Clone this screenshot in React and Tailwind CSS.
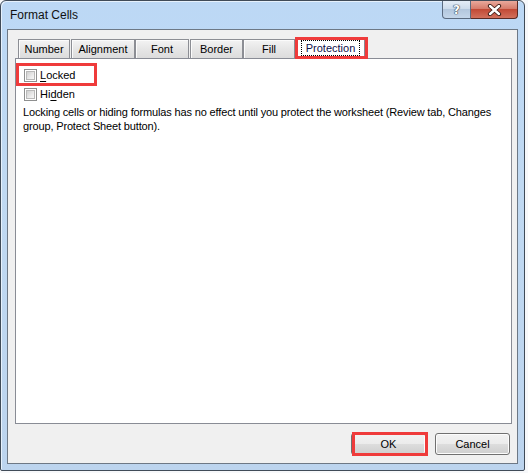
import React from "react";

function Tab({ label, w, ml }) {
  return (
    <div
      className={`h-[19px] ${w} ${ml} border border-b-0 border-[#8c8e94] bg-[linear-gradient(to_bottom,#f3f3f3,#e6e6e6_50%,#dcdcdc)] shadow-[inset_1px_1px_0_#fbfbfb] flex items-center justify-center text-[11px] leading-none pt-[1px]`}
    >
      {label}
    </div>
  );
}

function Check({ children }) {
  return (
    <div className="flex items-center h-[13px]">
      <div className="w-[13px] h-[13px] border border-[#8e8f8f] bg-white p-[1px]">
        <div className="w-full h-full border border-[#b9b9b9] bg-[linear-gradient(135deg,#cfcfcf,#eeeeee_70%,#f6f6f6)]" />
      </div>
      <span className="ml-[3px] text-[11px] leading-none">{children}</span>
    </div>
  );
}

function Btn({ children }) {
  return (
    <div className="w-[75px] h-[22px] rounded-[3px] border border-[#707070] bg-[linear-gradient(to_bottom,#f2f2f2_0%,#ebebeb_50%,#dddddd_50%,#cfcfcf_100%)] shadow-[inset_0_0_0_1px_#fcfcfc] flex items-center justify-center text-[11px] leading-none">
      {children}
    </div>
  );
}

export default function App() {
  return (
    <div className="w-[528px] h-[473px] bg-[#f7f8fa] overflow-hidden font-['Liberation_Sans',Arial,sans-serif] text-black">
      <div className="w-[525px] h-[471px] rounded-t-[6px] rounded-b-[2px] border border-[#404b58] bg-[linear-gradient(to_bottom,#bcd8f5,#c0d9f2_40%,#bcd4ee)] shadow-[inset_1px_1px_0_#e6f1fc] flex flex-col px-[6px] pb-[6px]">
        {/* Title bar */}
        <div className="h-[28px] flex items-start justify-between">
          <span className="ml-[3px] mt-[7px] text-[12px] leading-[14px] text-[#111]">Format Cells</span>
          <div className="flex">
            <div className="w-[29px] h-[18px] rounded-bl-[4px] border border-t-0 border-[#5b6b80] bg-[linear-gradient(to_bottom,#e4edf7,#cbdaea_50%,#b3c7dd_50%,#c4d6ea)] flex items-center justify-center">
              <span className="font-['DejaVu_Sans',sans-serif] font-bold text-[12px] leading-none text-white [text-shadow:0_0_1px_#2b3a4c,0_0_1px_#2b3a4c,0_0_1px_#2b3a4c]">?</span>
            </div>
            <div className="w-[47px] h-[18px] rounded-br-[4px] border border-t-0 border-l-0 border-[#5b2a24] bg-[linear-gradient(to_bottom,#e9a99c,#d47766_50%,#c24a36_50%,#d2705c)] flex items-center justify-center">
              <svg width="15" height="12" viewBox="0 0 15 12">
                <path d="M3 2 L12 10 M12 2 L3 10" stroke="#3a1a14" strokeWidth="4.2" strokeLinecap="round" fill="none" />
                <path d="M3 2 L12 10 M12 2 L3 10" stroke="#ffffff" strokeWidth="2.4" strokeLinecap="round" fill="none" />
              </svg>
            </div>
          </div>
        </div>

        {/* Client area */}
        <div className="flex-1 border border-[#6d7885] bg-[#f0f0f0] flex flex-col pl-[7px] pr-[5px] pt-[7px]">
          {/* Tabs */}
          <div className="h-[21px] flex items-end pl-[3px]">
            <Tab label="Number" w="w-[52px]" ml="" />
            <Tab label="Alignment" w="w-[64px]" ml="ml-[1px]" />
            <Tab label="Font" w="w-[54px]" ml="" />
            <Tab label="Border" w="w-[53px]" ml="ml-[1px]" />
            <Tab label="Fill" w="w-[52px]" ml="" />
            <div className="relative z-10 ml-[1px] mb-[-1px] w-[69px] h-[22px] border border-b-0 border-[#898c95] bg-white flex justify-center pt-[2px]">
              <div className="h-[16px] px-[4px] border border-dotted border-black flex items-center text-[11px] leading-none text-[#10104a]">
                Protection
              </div>
              <div className="absolute left-[-2px] top-[-1px] w-[73px] h-[22px] border-[3px] border-[#ef3b3b]" />
            </div>
          </div>

          {/* Panel */}
          <div className="flex-1 border border-[#898c95] bg-white flex flex-col pl-[8px] pt-[10px]">
            <div className="relative">
              <Check>
                <span className="underline underline-offset-2">L</span>ocked
              </Check>
              <div className="absolute left-[-8px] top-[-6px] w-[81px] h-[23px] border-[3px] border-[#ef3b3b]" />
            </div>
            <div className="mt-[6px]">
              <Check>
                Hi<span className="underline underline-offset-2">d</span>den
              </Check>
            </div>
            <p className="ml-[-1px] mt-[4px] text-[11px] leading-[14px] tracking-[-0.15px] whitespace-nowrap">
              Locking cells or hiding formulas has no effect until you protect the worksheet (Review tab, Changes
              <br />
              group, Protect Sheet button).
            </p>
          </div>

          {/* Buttons */}
          <div className="flex justify-end gap-[9px] mt-[9px] mb-[8px] mr-[2px]">
            <div className="relative">
              <Btn>OK</Btn>
              <div className="absolute left-[1px] top-[-1px] w-[76px] h-[24px] border-[3px] border-[#ef3b3b]" />
            </div>
            <Btn>Cancel</Btn>
          </div>
        </div>
      </div>
    </div>
  );
}
